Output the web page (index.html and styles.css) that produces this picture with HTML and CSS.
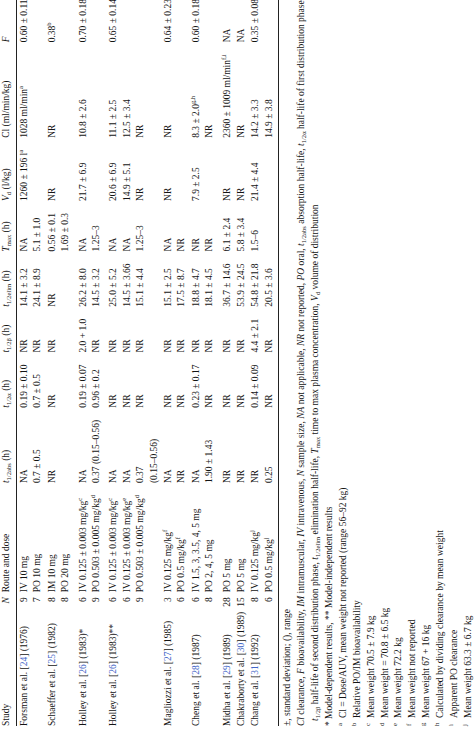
FILE: index.html
```html
<!DOCTYPE html>
<html lang="en">
<head>
<meta charset="utf-8">
<title>Pharmacokinetic parameters</title>
<link rel="stylesheet" href="styles.css">
</head>
<body>
<div class="viewport">
  <div class="sheet">
    <table class="pk">
      <thead>
        <tr>
          <th class="study">Study</th>
          <th class="n"><i>N</i></th>
          <th>Route and dose</th>
          <th><i>t</i><sub>1/2abs</sub> (h)</th>
          <th><i>t</i><sub>1/2α</sub> (h)</th>
          <th><i>t</i><sub>1/2β</sub> (h)</th>
          <th><i>t</i><sub>1/2elim</sub> (h)</th>
          <th><i>T</i><sub>max</sub> (h)</th>
          <th><i>V</i><sub>d</sub> (l/kg)</th>
          <th>Cl (ml/min/kg)</th>
          <th><i>F</i></th>
        </tr>
      </thead>
      <tbody>
        <tr>
          <td class="study">Forsman et al. [<a>24</a>] (1976)</td><td class="n">9</td><td>IV 10 mg</td>
          <td>NA</td><td>0.19 ± 0.10</td><td>NR</td><td>14.1 ± 3.2</td><td>NA</td>
          <td>1260 ± 196 l<sup>a</sup></td><td>1028 ml/min<sup>a</sup></td><td>0.60 ± 0.11</td>
        </tr>
        <tr>
          <td class="study"></td><td class="n">7</td><td>PO 10 mg</td>
          <td>0.7 ± 0.5</td><td>0.7 ± 0.5</td><td>NR</td><td>24.1 ± 8.9</td><td>5.1 ± 1.0</td>
          <td></td><td></td><td></td>
        </tr>
      </tbody>
      <tbody>
        <tr>
          <td class="study">Schaeffer et al. [<a>25</a>] (1982)</td><td class="n">8</td><td>IM 10 mg</td>
          <td>NR</td><td>NR</td><td>NR</td><td>NR</td><td>0.56 ± 0.1</td>
          <td>NR</td><td>NR</td><td>0.38<sup>b</sup></td>
        </tr>
        <tr>
          <td class="study"></td><td class="n">8</td><td>PO 20 mg</td>
          <td></td><td></td><td></td><td></td><td>1.69 ± 0.3</td>
          <td></td><td></td><td></td>
        </tr>
      </tbody>
      <tbody class="wide">
        <tr>
          <td class="study">Holley et al. [<a>26</a>] (1983)*</td><td class="n">6</td><td>IV 0.125 ± 0.003 mg/kg<sup>c</sup></td>
          <td>NA</td><td>0.19 ± 0.07</td><td>2.0 + 1.0</td><td>26.2 ± 8.0</td><td>NA</td>
          <td>21.7 ± 6.9</td><td>10.8 ± 2.6</td><td>0.70 ± 0.18</td>
        </tr>
        <tr>
          <td class="study"></td><td class="n">9</td><td>PO 0.503 ± 0.005 mg/kg<sup>d</sup></td>
          <td>0.37 (0.15–0.56)</td><td>0.96 ± 0.2</td><td>NR</td><td>14.5 ± 3.2</td><td>1.25–3</td>
          <td></td><td></td><td></td>
        </tr>
      </tbody>
      <tbody class="wide">
        <tr>
          <td class="study">Holley et al. [<a>26</a>] (1983)**</td><td class="n">6</td><td>IV 0.125 ± 0.003 mg/kg<sup>c</sup></td>
          <td>NA</td><td>NR</td><td>NR</td><td>25.0 ± 5.2</td><td>NA</td>
          <td>20.6 ± 6.9</td><td>11.1 ± 2.5</td><td>0.65 ± 0.14</td>
        </tr>
        <tr>
          <td class="study"></td><td class="n">6</td><td>IV 0.125 ± 0.003 mg/kg<sup>e</sup></td>
          <td>NA</td><td>NR</td><td>NR</td><td>14.5 ± 3.66</td><td>NA</td>
          <td>14.9 ± 5.1</td><td>12.5 ± 3.4</td><td></td>
        </tr>
        <tr>
          <td class="study"></td><td class="n">9</td><td>PO 0.503 ± 0.005 mg/kg<sup>d</sup></td>
          <td>0.37<br>(0.15–0.56)</td><td>NR</td><td>NR</td><td>15.1 ± 4.4</td><td>1.25–3</td>
          <td>NR</td><td>NR</td><td></td>
        </tr>
      </tbody>
      <tbody>
        <tr>
          <td class="study">Magliozzi et al. [<a>27</a>] (1985)</td><td class="n">3</td><td>IV 0.125 mg/kg<sup>f</sup></td>
          <td>NA</td><td>NR</td><td>NR</td><td>15.1 ± 2.5</td><td>NA</td>
          <td>NR</td><td>NR</td><td>0.64 ± 0.23</td>
        </tr>
        <tr>
          <td class="study"></td><td class="n">6</td><td>PO 0.5 mg/kg<sup>f</sup></td>
          <td>NR</td><td>NR</td><td>NR</td><td>17.5 ± 8.7</td><td>NR</td>
          <td></td><td></td><td></td>
        </tr>
      </tbody>
      <tbody>
        <tr>
          <td class="study">Cheng et al. [<a>28</a>] (1987)</td><td class="n">6</td><td>IV 1.5, 3, 3.5, 4, 5 mg</td>
          <td>NA</td><td>0.23 ± 0.17</td><td>NR</td><td>18.8 ± 4.7</td><td>NR</td>
          <td>7.9 ± 2.5</td><td>8.3 ± 2.0<sup>g,h</sup></td><td>0.60 ± 0.18</td>
        </tr>
        <tr>
          <td class="study"></td><td class="n">8</td><td>PO 2, 4, 5 mg</td>
          <td>1.90 ± 1.43</td><td>NR</td><td>NR</td><td>18.1 ± 4.5</td><td>NR</td>
          <td></td><td>NR</td><td></td>
        </tr>
      </tbody>
      <tbody class="wide">
        <tr>
          <td class="study">Midha et al. [<a>29</a>] (1989)</td><td class="n">28</td><td>PO 5 mg</td>
          <td>NR</td><td>NR</td><td>NR</td><td>36.7 ± 14.6</td><td>6.1 ± 2.4</td>
          <td>NR</td><td>2360 ± 1009 ml/min<sup>f,i</sup></td><td>NA</td>
        </tr>
      </tbody>
      <tbody>
        <tr>
          <td class="study">Chakraborty et al. [<a>30</a>] (1989)</td><td class="n">15</td><td>PO 5 mg</td>
          <td>NR</td><td>NR</td><td>NR</td><td>53.9 ± 24.5</td><td>5.8 ± 3.4</td>
          <td>NR</td><td>NR</td><td>NA</td>
        </tr>
      </tbody>
      <tbody>
        <tr>
          <td class="study">Chang et al. [<a>31</a>] (1992)</td><td class="n">8</td><td>IV 0.125 mg/kg<sup>j</sup></td>
          <td>NR</td><td>0.14 ± 0.09</td><td>4.4 ± 2.1</td><td>54.8 ± 21.8</td><td>1.5–6</td>
          <td>21.4 ± 4.4</td><td>14.2 ± 3.3</td><td>0.35 ± 0.08</td>
        </tr>
        <tr>
          <td class="study"></td><td class="n">6</td><td>PO 0.5 mg/kg<sup>j</sup></td>
          <td>0.25</td><td>NR</td><td>NR</td><td>20.5 ± 3.6</td><td></td>
          <td></td><td>14.9 ± 3.8</td><td></td>
        </tr>
      </tbody>
    </table>
    <div class="notes">
      <p class="line">±, standard deviation; (), range</p>
      <p class="line"><i>Cl</i> clearance, <i>F</i> bioavailability, <i>IM</i> intramuscular, <i>IV</i> intravenous, <i>N</i> sample size, <i>NA</i> not applicable, <i>NR</i> not reported, <i>PO</i> oral, <i>t</i><sub>1/2abs</sub> absorption half-life, <i>t</i><sub>1/2α</sub> half-life of first distribution phase,</p>
      <p class="line indent"><i>t</i><sub>1/2β</sub> half-life of second distribution phase, <i>t</i><sub>1/2elim</sub> elimination half-life, <i>T</i><sub>max</sub> time to max plasma concentration, <i>V</i><sub>d</sub> volume of distribution</p>
      <p class="line">* Model-dependent results, ** Model-independent results</p>
      <p class="line"><sup class="mk">a</sup>Cl = Dose/AUV, mean weight not reported (range 56–92 kg)</p>
      <p class="line"><sup class="mk">b</sup>Relative PO/IM bioavailability</p>
      <p class="line"><sup class="mk">c</sup>Mean weight 70.5 ± 7.9 kg</p>
      <p class="line"><sup class="mk">d</sup>Mean weight = 70.8 ± 6.5 kg</p>
      <p class="line"><sup class="mk">e</sup>Mean weight 72.2 kg</p>
      <p class="line"><sup class="mk">f</sup>Mean weight not reported</p>
      <p class="line"><sup class="mk">g</sup>Mean weight 67 + 16 kg</p>
      <p class="line"><sup class="mk">h</sup>Calculated by dividing clearance by mean weight</p>
      <p class="line"><sup class="mk">i</sup>Apparent PO clearance</p>
      <p class="line"><sup class="mk">j</sup>Mean weight 63.3 ± 6.7 kg</p>
    </div>
  </div>
</div>
</body>
</html>
```

FILE: styles.css
```css
html, body {
  margin: 0;
  padding: 0;
  background: #ffffff;
}

.viewport {
  width: 474px;
  height: 733px;
  overflow: hidden;
}

.sheet {
  width: 800px;
  height: 474px;
  box-sizing: border-box;
  padding-left: 3px;
  transform-origin: 0 0;
  transform: translateY(733px) rotate(-90deg);
  font-family: "Liberation Serif", "Times New Roman", serif;
  font-size: 9.5px;
  color: #141414;
}

.pk {
  border-collapse: collapse;
  margin-top: -4px;
}

.pk th,
.pk td {
  padding: 0 12px 0 0;
  white-space: nowrap;
  text-align: left;
  font-weight: normal;
  line-height: 13.4px;
  vertical-align: top;
}

.pk .study {
  padding-right: 5px;
}

.pk .n {
  text-align: right;
  padding-right: 5px;
}

.pk thead th {
  padding-bottom: 2.5px;
  border-bottom: 1px solid #222222;
}

.pk tbody tr:first-child td {
  padding-top: 1px;
}

.pk tbody.wide tr:first-child td {
  padding-top: 4px;
}

.pk tbody:last-child tr:last-child td {
  padding-bottom: 2px;
}

.pk a {
  color: #4266c8;
  text-decoration: none;
}

.pk sub,
.notes sub {
  font-size: 6.6px;
  vertical-align: -2px;
  line-height: 0;
}

.pk sup,
.notes sup {
  font-size: 6.6px;
  vertical-align: 4px;
  line-height: 0;
}

.notes {
  border-top: 1px solid #222222;
  padding-top: 2px;
}

.notes .line {
  margin: 0;
  line-height: 13.9px;
  white-space: nowrap;
}

.notes .indent {
  padding-left: 5px;
}

.notes .mk {
  display: inline-block;
  width: 8px;
}
```
